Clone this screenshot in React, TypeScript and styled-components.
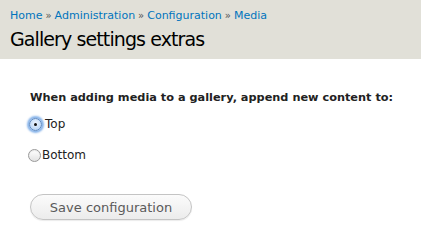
import React from 'react';
import styled, { createGlobalStyle } from 'styled-components';

const GlobalStyle = createGlobalStyle`
  html, body {
    margin: 0;
    padding: 0;
    background: #ffffff;
  }
  body {
    font-family: "DejaVu Sans", "Liberation Sans", sans-serif;
    width: 421px;
    height: 239px;
    overflow: hidden;
  }
`;

const Header = styled.header`
  background: #e1e0d8;
  padding: 9px 10px 11px;
  height: 39px;
`;

const Breadcrumb = styled.nav`
  font-size: 11px;
  line-height: 13px;
  color: #0074bd;
`;

const Crumb = styled.a`
  color: #0074bd;
  text-decoration: none;
`;

const Sep = styled.span`
  color: #555;
  margin: 0 3px;
  font-size: 10px;
`;

const Title = styled.h1`
  margin: 6px 0 0;
  font-size: 19px;
  font-weight: normal;
  letter-spacing: -0.9px;
  line-height: 22px;
  color: #000;
`;

const Form = styled.form`
  padding: 32px 0 0 30px;
`;

const Legend = styled.div`
  font-size: 11.3px;
  font-weight: bold;
  color: #222;
  line-height: 14px;
`;

const Options = styled.div`
  display: flex;
  flex-direction: column;
  gap: 16px;
  margin: 12px 0 0 -2px;
`;

const OptionRow = styled.label`
  display: flex;
  align-items: center;
  font-size: 12px;
  color: #222;
  line-height: 15px;
`;

const RadioCircle = styled.span<{ checked?: boolean }>`
  position: relative;
  flex: none;
  width: 13px;
  height: 13px;
  border-radius: 50%;
  box-sizing: border-box;
  border: 1px solid ${({ checked }) => (checked ? '#5a87c0' : '#9a9a9a')};
  background: ${({ checked }) =>
    checked ? 'radial-gradient(circle at 50% 40%, #eef6ff, #a9cbf2)' : 'linear-gradient(#ffffff, #e2e2e2)'};
  box-shadow: ${({ checked }) => (checked ? '0 0 2px 2px #86b3ea' : 'inset 0 1px 1px rgba(0,0,0,0.08)')};
  margin: 0 ${({ checked }) => (checked ? '3px' : '1px')} 0 ${({ checked }) => (checked ? '1px' : '0')};

  &::after {
    content: '';
    display: ${({ checked }) => (checked ? 'block' : 'none')};
    position: absolute;
    left: 4px;
    top: 4px;
    width: 3px;
    height: 3px;
    border-radius: 50%;
    background: #111;
  }
`;

const SaveButton = styled.button`
  margin-top: 31px;
  width: 162px;
  height: 26px;
  border-radius: 13px;
  border: 1px solid #c4c4c4;
  background: linear-gradient(#fbfbfb, #ececec);
  font-family: "DejaVu Sans", sans-serif;
  font-size: 13px;
  color: #5a5a5a;
  padding: 0;
  box-shadow: 0 1px 1px rgba(0, 0, 0, 0.08);
`;

const App = () => (
  <>
    <GlobalStyle />
    <Header>
      <Breadcrumb>
        <Crumb href="#">Home</Crumb>
        <Sep>»</Sep>
        <Crumb href="#">Administration</Crumb>
        <Sep>»</Sep>
        <Crumb href="#">Configuration</Crumb>
        <Sep>»</Sep>
        <Crumb href="#">Media</Crumb>
      </Breadcrumb>
      <Title>Gallery settings extras</Title>
    </Header>
    <Form>
      <Legend>When adding media to a gallery, append new content to:</Legend>
      <Options>
        <OptionRow>
          <RadioCircle checked />
          Top
        </OptionRow>
        <OptionRow>
          <RadioCircle />
          Bottom
        </OptionRow>
      </Options>
      <SaveButton type="button">Save configuration</SaveButton>
    </Form>
  </>
);

export default App;
